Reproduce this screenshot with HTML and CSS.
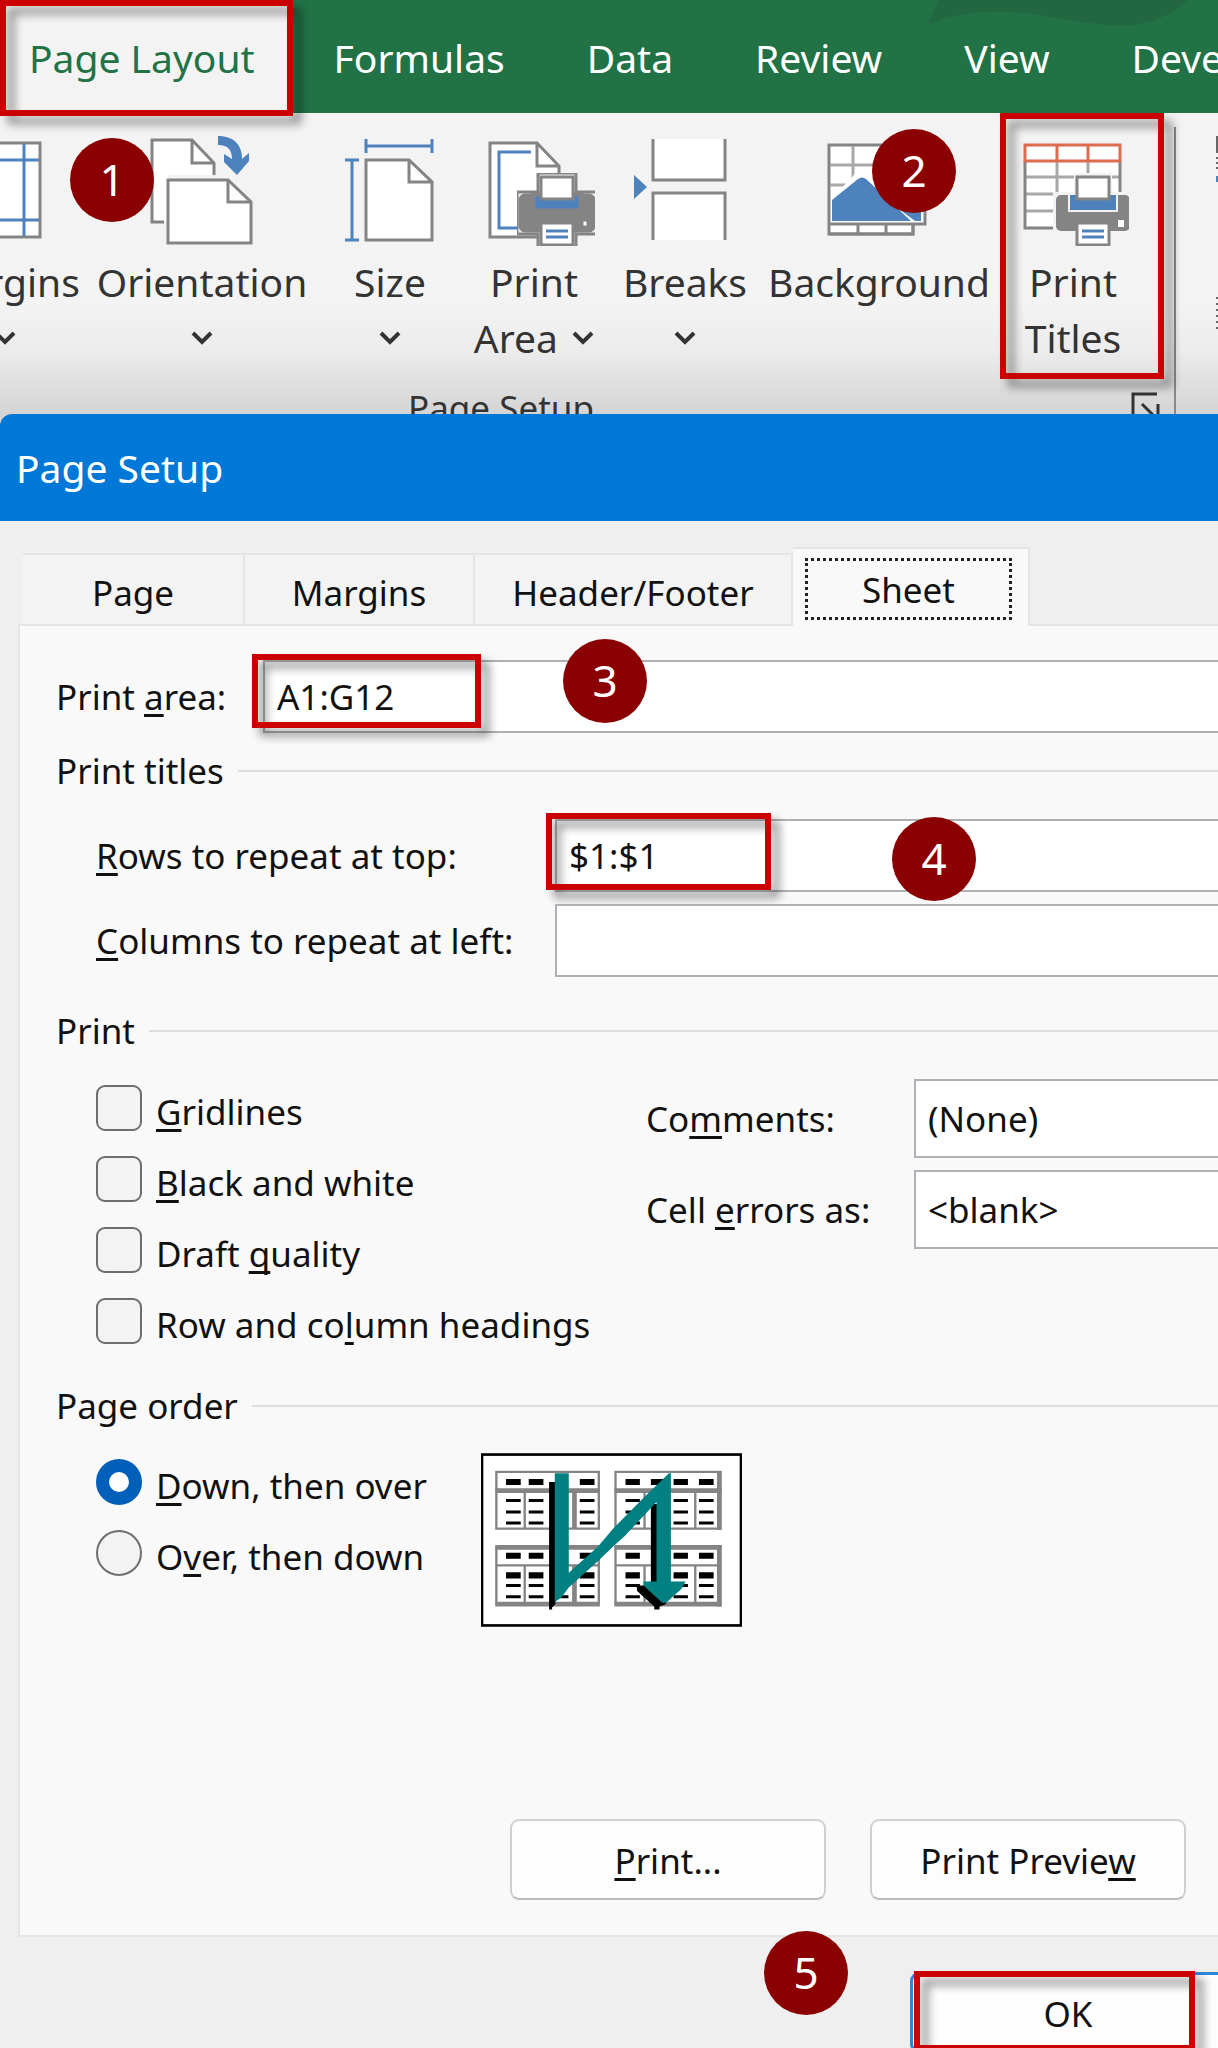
FILE: index.html
```
<!DOCTYPE html>
<html lang="en">

<head>
    <meta charset="UTF-8" />
    <meta name="viewport" content="width=device-width, initial-scale=1.0" />
    <title>Page Setup</title>
    <link rel="stylesheet" href="styles.css">
</head>

<body>
    <!-- shared printer glyph -->
    <svg class="defs" width="0" height="0" aria-hidden="true">
        <symbol id="printer" viewBox="-3 -3 80 77">
            <path d="M18 -3H56V16H77V58H56V74H18V58H-3V16H18Z" fill="#f3f3f3" />
            <rect x="0" y="19" width="74" height="36" rx="5" fill="#848484" />
            <rect x="12" y="17" width="50" height="19" fill="#f3f3f3" />
            <rect x="14" y="19" width="46" height="15" fill="#4e82bc" />
            <rect x="21" y="1" width="32" height="22" fill="#fff" stroke="#848484" stroke-width="3" />
            <rect x="21" y="47" width="32" height="22" fill="#fff" stroke="#848484" stroke-width="3" />
            <path d="M26 55H48M26 61H48" stroke="#4e82bc" stroke-width="3" />
            <rect x="62" y="44" width="6" height="7" fill="#fff" />
        </symbol>
    </svg>

    <header class="ribbon">
        <nav class="ribbon-tabs">
            <svg class="swoosh" width="270" height="30" viewBox="0 0 270 30" aria-hidden="true">
                <path d="M10 0H260C240 18 215 28 180 25C120 20 70 -2 0 24Z" fill="#236740" />
            </svg>
            <a href="#" class="ribbon-tab active">Page Layout<span class="mark"></span></a>
            <a href="#" class="ribbon-tab">Formulas</a>
            <a href="#" class="ribbon-tab">Data</a>
            <a href="#" class="ribbon-tab">Review</a>
            <a href="#" class="ribbon-tab">View</a>
            <a href="#" class="ribbon-tab">Developer</a>
        </nav>

        <div class="ribbon-body">
            <div class="group">
                <div class="tools">
                    <button type="button" class="tool">
                        <svg width="74" height="110" viewBox="0 0 74 110" fill="none" stroke-width="3">
                            <rect x="2" y="7" width="70" height="94" fill="#fff" stroke="#848484" />
                            <path d="M56 8V100M18 8V100M3 24H71M3 84H71" stroke="#4e82bc" />
                        </svg>
                        <span>Margins</span>
                        <span><svg class="chevron" width="22" height="14" viewBox="0 0 22 14"><path d="M2 2L11 11L20 2" /></svg></span>
                    </button>
                    <button type="button" class="tool">
                        <svg width="104" height="110" viewBox="0 0 104 110" fill="none" stroke="#848484" stroke-width="3">
                            <path d="M2 86V4H42L64 27V39H18V86Z" fill="#fff" stroke="none" />
                            <path d="M14 86H2V4H42L64 27V39M42 4V27H64" />
                            <path d="M18 44H78L101 66V107H18Z" fill="#fff" />
                            <path d="M78 44V66H101" />
                            <path d="M68 0C84 0 92 9 92 23L99 17V25L87 39L74 26V18L82 23C82 14 78 9 68 9Z" fill="#4e82bc" stroke="none" />
                        </svg>
                        <span>Orientation</span>
                        <span><svg class="chevron" width="22" height="14" viewBox="0 0 22 14"><path d="M2 2L11 11L20 2" /></svg></span>
                    </button>
                    <button type="button" class="tool">
                        <svg width="90" height="110" viewBox="0 0 90 110" fill="none" stroke="#848484" stroke-width="3">
                            <path d="M21 10H87M21 3V17M87 3V17M7 24V104M0 24H14M0 104H14" stroke="#4e82bc" />
                            <path d="M21 24H64L87 46V104H21Z" fill="#fff" />
                            <path d="M64 24V46H87" />
                        </svg>
                        <span>Size</span>
                        <span><svg class="chevron" width="22" height="14" viewBox="0 0 22 14"><path d="M2 2L11 11L20 2" /></svg></span>
                    </button>
                    <button type="button" class="tool">
                        <svg width="122" height="110" viewBox="0 0 122 110" fill="none" stroke="#848484" stroke-width="3">
                            <path d="M17 7H64L86 30V60H64V101H17Z" fill="#fff" stroke="none" />
                            <path d="M64 101H17V7H64L86 30V37M64 7V30H86" />
                            <path d="M58 16H26V92H45" stroke="#4e82bc" />
                            <use href="#printer" x="44" y="37" width="80" height="77" />
                        </svg>
                        <span>Print</span>
                        <span class="with-chevron">Area <svg class="chevron" width="22" height="14" viewBox="0 0 22 14"><path d="M2 2L11 11L20 2" /></svg></span>
                    </button>
                    <button type="button" class="tool">
                        <svg width="102" height="110" viewBox="0 0 102 110" stroke="#848484" stroke-width="3">
                            <path d="M19 3V44H91V3" fill="#fff" />
                            <path d="M19 104V57H91V104" fill="#fff" />
                            <path d="M0 39L13 51L0 63Z" fill="#4e82bc" stroke="none" />
                        </svg>
                        <span>Breaks</span>
                        <span><svg class="chevron" width="22" height="14" viewBox="0 0 22 14"><path d="M2 2L11 11L20 2" /></svg></span>
                    </button>
                    <button type="button" class="tool tool-background">
                        <svg width="104" height="110" viewBox="0 0 104 110" fill="none" stroke-width="3">
                            <path d="M2 9H86V98H2Z" fill="#fff" stroke="#848484" />
                            <path d="M26 10V44M55 10V44M3 29H84M3 49H24" stroke="#a8a8a8" />
                            <path d="M5 62L28 38H98V88H5Z" fill="#fff" />
                            <path d="M98 40V88H2" stroke="#848484" />
                            <path d="M5 64L31 43Q35 40 39 43L84 85H5Z" fill="#4e82bc" />
                            <path d="M60 64L72 56L94 76V85H88Z" fill="#4e82bc" />
                            <path d="M2 98H86V89M31 89V97M59 89V97" stroke="#848484" />
                        </svg>
                        <span>Background</span>
                        <b class="badge badge-2">2</b>
                    </button>
                    <button type="button" class="tool tool-titles">
                        <svg width="112" height="110" viewBox="0 0 112 110" fill="none" stroke-width="3">
                            <path d="M8 9H103V58H40V92H8Z" fill="#fff" />
                            <path d="M8 41H103M8 58H40M8 75H40M40 25V92M71 25V41" stroke="#a8a8a8" />
                            <path d="M8 25V92H38M103 25V57" stroke="#848484" />
                            <path d="M8 9H103V25H8ZM40 9V25M71 9V25" stroke="#dd6b4d" />
                            <use href="#printer" x="36" y="37" width="80" height="77" />
                        </svg>
                        <span>Print</span>
                        <span>Titles</span>
                        <i class="mark"></i>
                    </button>
                    <b class="badge badge-1">1</b>
                </div>
                <div class="group-footer">
                    <span>Page Setup</span>
                    <button type="button" class="launcher" aria-label="Page Setup dialog">
                        <svg width="32" height="32" viewBox="0 0 32 32" fill="none" stroke="#333" stroke-width="3">
                            <path d="M3 32V2H27M12 12L26 26M28 12V28H12" />
                        </svg>
                    </button>
                </div>
            </div>
            <div class="separator"></div>
            <svg class="next-group" width="60" height="240" viewBox="0 0 60 240" aria-hidden="true">
                <rect width="60" height="17" fill="#666" />
                <path d="M0 22H60M0 27H60M0 32H60" stroke="#666" stroke-width="2" />
                <rect y="40" width="60" height="6" fill="#4e82bc" />
                <path d="M0 162H60M0 168H60M0 174H60M0 180H60M0 186H60M0 192H60" stroke="#666" stroke-width="2" />
            </svg>
        </div>
    </header>

    <main class="dialog">
        <h1 class="dialog-title">Page Setup</h1>

        <form class="dialog-body">
            <div class="tabs" role="tablist">
                <button type="button" role="tab" class="tab tab-page">Page</button>
                <button type="button" role="tab" class="tab tab-margins">Margins</button>
                <button type="button" role="tab" class="tab tab-header">Header/Footer</button>
                <button type="button" role="tab" class="tab active"><span>Sheet</span></button>
            </div>

            <div class="panel">
                <div class="row row-area">
                    <label for="printArea">Print <u>a</u>rea:</label>
                    <div class="field">
                        <input type="text" id="printArea" value="A1:G12">
                        <i class="mark mark-area"></i>
                        <b class="badge badge-3">3</b>
                    </div>
                </div>

                <section>
                    <h2>Print titles</h2>
                    <div class="titles">
                        <div class="row row-title">
                            <label for="rows"><u>R</u>ows to repeat at top:</label>
                            <div class="field">
                                <input type="text" id="rows" value="$1:$1">
                                <i class="mark mark-rows"></i>
                                <b class="badge badge-4">4</b>
                            </div>
                        </div>
                        <div class="row row-title">
                            <label for="columns"><u>C</u>olumns to repeat at left:</label>
                            <div class="field"><input type="text" id="columns"></div>
                        </div>
                    </div>
                </section>

                <section class="print">
                    <h2>Print</h2>
                    <div class="print-options">
                        <div class="options">
                            <label class="option"><input type="checkbox"><span><u>G</u>ridlines</span></label>
                            <label class="option"><input type="checkbox"><span><u>B</u>lack and white</span></label>
                            <label class="option"><input type="checkbox"><span>Draft <u>q</u>uality</span></label>
                            <label class="option"><input type="checkbox"><span>Row and co<u>l</u>umn headings</span></label>
                        </div>
                        <div class="selects">
                            <div class="row row-select">
                                <label for="comments">Co<u>m</u>ments:</label>
                                <select id="comments"><option>(None)</option></select>
                            </div>
                            <div class="row row-select">
                                <label for="errors">Cell <u>e</u>rrors as:</label>
                                <select id="errors"><option>&lt;blank&gt;</option></select>
                            </div>
                        </div>
                    </div>
                </section>

                <section class="order">
                    <h2>Page order</h2>
                    <div class="order-options">
                        <div class="options">
                            <label class="option"><input type="radio" name="order" checked><span><u>D</u>own, then over</span></label>
                            <label class="option"><input type="radio" name="order"><span>O<u>v</u>er, then down</span></label>
                        </div>
                        <svg class="order-preview" width="261" height="174" viewBox="35 38 782 520" aria-hidden="true">
                            <rect x="38" y="42" width="776" height="512" fill="#fff" stroke="#000" stroke-width="8" />
                            <!-- sheets -->
                            <g fill="none" stroke="#848484" stroke-width="7">
                                <path d="M81 94H388V264H81ZM166 155V264" />
                                <path d="M438 94H752V264H438ZM525 155V264M677 155V264" />
                                <path d="M81 320H388V490H81ZM81 374H388M166 374V490" />
                                <path d="M438 320H752V490H438ZM438 374H752M525 374V490M677 374V490" />
                            </g>
                            <g fill="none" stroke="#848484" stroke-width="14">
                                <path d="M78 150H391M435 150H756M78 320H391M435 320H756M78 490H391M435 490H756" />
                                <path d="M315 150V264M315 374V490M749 91V268M749 313V497" />
                            </g>
                            <!-- column headings -->
                            <g stroke="#000" stroke-width="18">
                                <path d="M110 124H154M178 124H222M331 124H375M468 124H511M544 124H588M612 124H655M688 124H732" />
                                <path d="M110 345H154M178 345H222M331 345H375M468 345H511M612 345H655M688 345H732" />
                                <path d="M110 404H154M178 404H222M331 404H375M468 404H511M612 404H655M688 404H732" />
                            </g>
                            <!-- cell text -->
                            <g stroke="#000" stroke-width="9">
                                <path d="M110 180H154M178 180H222M331 180H375M468 180H511M612 180H655M688 180H732" />
                                <path d="M110 214H154M178 214H222M331 214H375M468 214H511M612 214H655M688 214H732" />
                                <path d="M110 247H154M178 247H222M331 247H375M468 247H511M612 247H655M688 247H732" />
                                <path d="M110 434H154M178 434H222M331 434H375M468 434H511M612 434H655M688 434H732" />
                                <path d="M110 468H154M178 468H222M265 468H297M331 468H375M468 468H511M612 468H655M688 468H732" />
                            </g>
                            <!-- arrow and its shadow -->
                            <path d="M239 124H258V490L248 500V506H239ZM544 190H566V424L590 490L570 497V506H554V497L502 450V434H544Z" fill="#000" />
                            <path d="M256 98H298V396L385 318L430 265L514 180L598 98H604V422H648L636 444L590 486H578L522 434V422H561V184L465 287L430 318L385 362L298 440L276 470L256 484Z" fill="#008080" />
                        </svg>
                    </div>
                </section>

                <div class="panel-buttons">
                    <button type="button" class="btn"><u>P</u>rint...</button>
                    <button type="button" class="btn">Print Previe<u>w</u></button>
                </div>
            </div>

            <div class="dialog-buttons">
                <b class="badge badge-5">5</b>
                <button type="button" class="btn btn-ok">OK<i class="mark"></i></button>
            </div>
        </form>
    </main>
</body>

</html>
```
FILE: styles.css
```
* {
    margin: 0;
    padding: 0;
    box-sizing: border-box;
}

body {
    font-family: "Noto Sans", "Open Sans", sans-serif;
    font-size: 35px;
    color: #111;
    background: #efefef;
    height: 100vh;
    overflow: hidden;
}

button,
input,
select {
    font: inherit;
    color: inherit;
}

button {
    background: none;
    border: none;
}

u {
    text-decoration-thickness: 3px;
    text-underline-offset: 4px;
    text-decoration-skip-ink: none;
}

.defs {
    position: absolute;
}

/* red frames and numbered badges */
.mark {
    position: absolute;
    inset: 0;
    border: 6px solid #cc0000;
    filter: drop-shadow(8px 8px 5px rgba(0, 0, 0, 0.45));
    pointer-events: none;
}

.badge {
    position: absolute;
    width: 84px;
    height: 84px;
    border-radius: 50%;
    background: #8b0000;
    color: #fff;
    font-size: 44px;
    font-weight: 400;
    line-height: 82px;
    text-align: center;
    z-index: 3;
}

/* ribbon */
.ribbon {
    font-size: 39px;
}

.ribbon-tabs {
    position: relative;
    display: flex;
    height: 113px;
    background: #217346;
}

.swoosh {
    position: absolute;
    top: 0;
    right: 20px;
}

.ribbon-tab {
    position: relative;
    flex: none;
    padding: 0 41px;
    line-height: 116px;
    color: #fff;
    text-decoration: none;
}

.ribbon-tab.active {
    height: 116px;
    padding: 0 38px 0 29px;
    background: #f3f3f3;
    color: #217346;
    z-index: 1;
}

.ribbon-body {
    display: flex;
    background: linear-gradient(#f3f3f3 60%, #ececec 75%, #d4d4d4 95%);
    color: #333;
}

.group {
    flex: none;
    margin-left: -78px;
}

.tools {
    position: relative;
    display: grid;
    grid-template-columns: 166px 228px 148px 140px 162px 234px 164px;
}

.tool {
    position: relative;
    display: flex;
    flex-direction: column;
    align-items: center;
    padding: 23px 0 13px;
    line-height: 56px;
    white-space: nowrap;
}

.tool > svg {
    flex: none;
    margin-bottom: 8px;
}

.tool > span {
    height: 56px;
}

.tool-background {
    padding-right: 8px;
}

.tool-titles {
    padding-right: 18px;
}

.chevron {
    fill: none;
    stroke: #333;
    stroke-width: 4px;
    vertical-align: 8px;
}

.with-chevron .chevron {
    margin-left: 4px;
}

.badge-1 {
    left: 148px;
    top: 25px;
}

.badge-2 {
    left: 106px;
    top: 16px;
}

.group-footer {
    display: flex;
    justify-content: space-between;
    padding: 7px 2px 0 486px;
    font-size: 35px;
    line-height: 44px;
}

.launcher {
    height: 32px;
    line-height: 0;
}

.launcher svg {
    margin-top: 6px;
}

.separator {
    flex: none;
    width: 2px;
    margin: 14px 40px 0 10px;
    background: #8a8a8a;
}

.next-group {
    flex: none;
    margin-top: 23px;
}

/* dialog */
.dialog {
    position: relative;
    margin-top: -16px;
    background: #efefef;
    border-radius: 12px 0 0 0;
}

.dialog-title {
    padding-left: 16px;
    background: #0078d7;
    color: #fff;
    border-radius: 12px 0 0 0;
    font-size: 39px;
    font-weight: 400;
    line-height: 107px;
}

.dialog-body {
    padding: 26px 0 0 18px;
}

/* sheet tabs */
.tabs {
    display: flex;
    align-items: flex-end;
    padding-left: 5px;
}

.tab {
    flex: none;
    height: 71px;
    padding-top: 6px;
    border: 2px solid #e5e5e5;
    border-width: 2px 2px 0 0;
    background: #f3f3f3;
}

.tab-page {
    width: 222px;
}

.tab-margins {
    width: 230px;
}

.tab-header {
    width: 318px;
}

.tab.active {
    position: relative;
    width: 237px;
    height: 79px;
    margin-bottom: -2px;
    padding: 9px 16px 6px 12px;
    background: #f9f9f9;
}

.tab.active span {
    display: block;
    height: 62px;
    border: 3px dotted #222;
    line-height: 58px;
}

.panel {
    margin-right: -20px;
    padding: 34px 0 35px 36px;
    border: 2px solid #e5e5e5;
    background: #f9f9f9;
}

.row {
    display: grid;
    align-items: center;
    white-space: nowrap;
}

.row-area {
    grid-template-columns: 207px 1fr;
    margin-bottom: 14px;
}

.row-title {
    grid-template-columns: 459px 1fr;
    margin-bottom: 12px;
}

.row-select {
    grid-template-columns: 268px 1fr;
    margin-bottom: 12px;
}

.field {
    position: relative;
}

.field input {
    display: block;
    width: 100%;
    height: 73px;
    padding: 0 12px;
    border: 2px solid #aeb0b5;
    background: #fff;
}

.mark-area {
    inset: -6px auto auto -11px;
    width: 229px;
    height: 74px;
}

.mark-rows {
    inset: -6px auto auto -9px;
    width: 225px;
    height: 77px;
}

.badge-3 {
    left: 300px;
    top: -21px;
}

.badge-4 {
    left: 337px;
    top: -2px;
}

h2 {
    display: flex;
    align-items: center;
    gap: 14px;
    font-size: 35px;
    font-weight: 400;
    line-height: 48px;
}

h2::after {
    content: "";
    flex: 1;
    height: 2px;
    background: #dedede;
}

.titles {
    padding: 24px 0 0 40px;
}

.print {
    margin-top: 30px;
}

.print-options {
    display: grid;
    grid-template-columns: 550px 1fr;
    padding: 24px 0 0 40px;
}

.options {
    display: flex;
    flex-direction: column;
    gap: 25px;
    padding-top: 6px;
}

.option {
    display: flex;
    align-items: center;
    gap: 14px;
    height: 46px;
    white-space: nowrap;
}

.option span {
    padding-top: 6px;
}

.option input {
    flex: none;
    appearance: none;
    width: 46px;
    height: 46px;
    border: 2px solid #6e6e6e;
    border-radius: 9px;
    background: #f3f3f3;
}

.option input[type="radio"] {
    border-radius: 50%;
}

.option input[type="radio"]:checked {
    border: 13px solid #005fb8;
    background: #fff;
}

select {
    appearance: none;
    width: 100%;
    height: 79px;
    padding: 0 12px;
    border: 2px solid #aeb0b5;
    border-radius: 0;
    background: #fff;
}

.order {
    margin-top: 38px;
}

.order-options {
    display: flex;
    gap: 52px;
    padding: 23px 0 0 40px;
}

.order-options .options {
    width: 333px;
}

.panel-buttons {
    display: flex;
    justify-content: flex-end;
    gap: 44px;
    margin-top: 192px;
    padding-right: 50px;
}

.btn {
    position: relative;
    width: 316px;
    height: 81px;
    padding-top: 2px;
    border: 2px solid #d0d0d0;
    border-bottom-color: #bbb;
    border-radius: 9px;
    background: #fdfdfd;
}

.dialog-buttons {
    position: relative;
    display: flex;
    justify-content: flex-end;
    margin: 35px -8px 0 0;
}

.btn-ok {
    border: 3px solid #2b88d8;
}

.btn-ok .mark {
    inset: -4px 28px -1px 1px;
}

.badge-5 {
    right: 378px;
    top: -41px;
}
```
